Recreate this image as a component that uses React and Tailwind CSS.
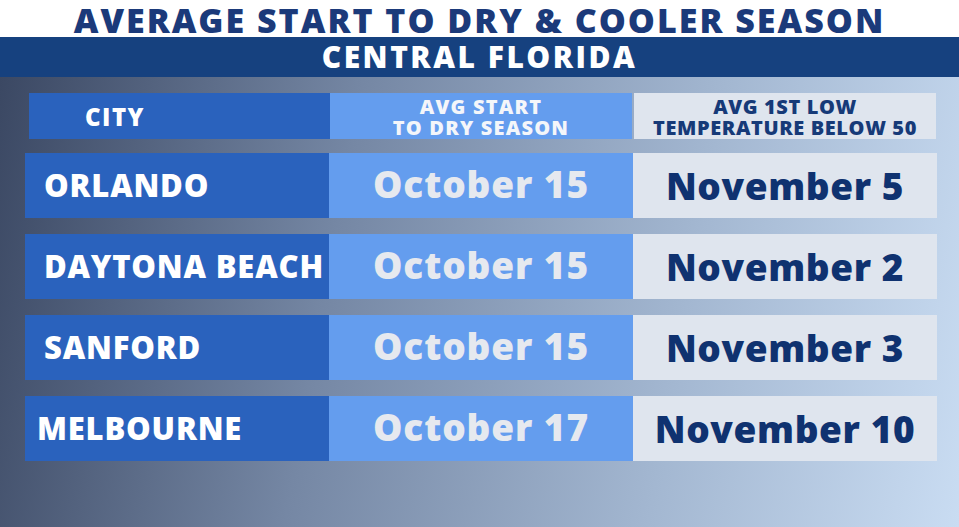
export default function App() {
  const rows = [
    { city: "ORLANDO", dry: "October 15", cold: "November 5" },
    { city: "DAYTONA BEACH", dry: "October 15", cold: "November 2" },
    { city: "SANFORD", dry: "October 15", cold: "November 3" },
    { city: "MELBOURNE", dry: "October 17", cold: "November 10" },
  ];
  return (
    <div
      className="w-[959px] h-[527px] overflow-hidden flex flex-col"
      style={{ fontFamily: '"Open Sans", "DejaVu Sans", sans-serif' }}
    >
      <div className="h-[37px] bg-white flex items-center justify-center pt-[3px]">
        <h1 className="text-[34px] font-extrabold text-[#1b3a7a] leading-[34px] tracking-[2px]">
          AVERAGE START TO DRY &amp; COOLER SEASON
        </h1>
      </div>
      <div className="h-[40px] bg-[#16417f] flex items-center justify-center">
        <h2 className="text-[30px] font-extrabold text-white leading-none tracking-[2.5px]">
          CENTRAL FLORIDA
        </h2>
      </div>
      <div className="flex-1 bg-[linear-gradient(100deg,#3b4863_0%,#7587a4_35%,#a3b7d1_70%,#c9dcf2_100%)] pt-[16px]">
        <div className="ml-[29px] w-[907px] h-[46px] grid grid-cols-[301px_302px_304px] font-extrabold leading-[21px] text-[20px]">
          <div className="bg-[#2a62bd] text-white flex items-center pl-[56px] text-[24px] tracking-[1.5px]">
            CITY
          </div>
          <div className="bg-[#649dee] text-[#f4f6fa] flex flex-col items-center justify-center text-center tracking-[1.2px] pt-[1px]">
            <span>AVG START</span>
            <span>TO DRY SEASON</span>
          </div>
          <div className="bg-[#dfe5ee] text-[#163a78] flex flex-col items-center justify-center text-center ml-[2px] tracking-[0.6px] pt-[1px]">
            <span>AVG 1ST LOW</span>
            <span>TEMPERATURE BELOW 50</span>
          </div>
        </div>
        <div className="mt-[14px] ml-[25px] w-[912px] flex flex-col gap-[16px]">
          {rows.map((r, i) => (
            <div key={i} className="h-[65px] grid grid-cols-[304px_304px_304px] font-extrabold">
              <div className={`bg-[#2a62bd] text-white flex items-center text-[31px] tracking-[0.8px] ${i === 3 ? "pl-[12px]" : "pl-[19px]"}`}>
                {r.city}
              </div>
              <div className="bg-[#649dee] text-[#e6e9ef] flex items-center justify-center text-[37px] tracking-[0.9px] pb-[4px]">
                {r.dry}
              </div>
              <div className="bg-[#dfe5ee] text-[#0f3270] flex items-center justify-center text-[37px] tracking-[0.6px]">
                {r.cold}
              </div>
            </div>
          ))}
        </div>
      </div>
    </div>
  );
}
